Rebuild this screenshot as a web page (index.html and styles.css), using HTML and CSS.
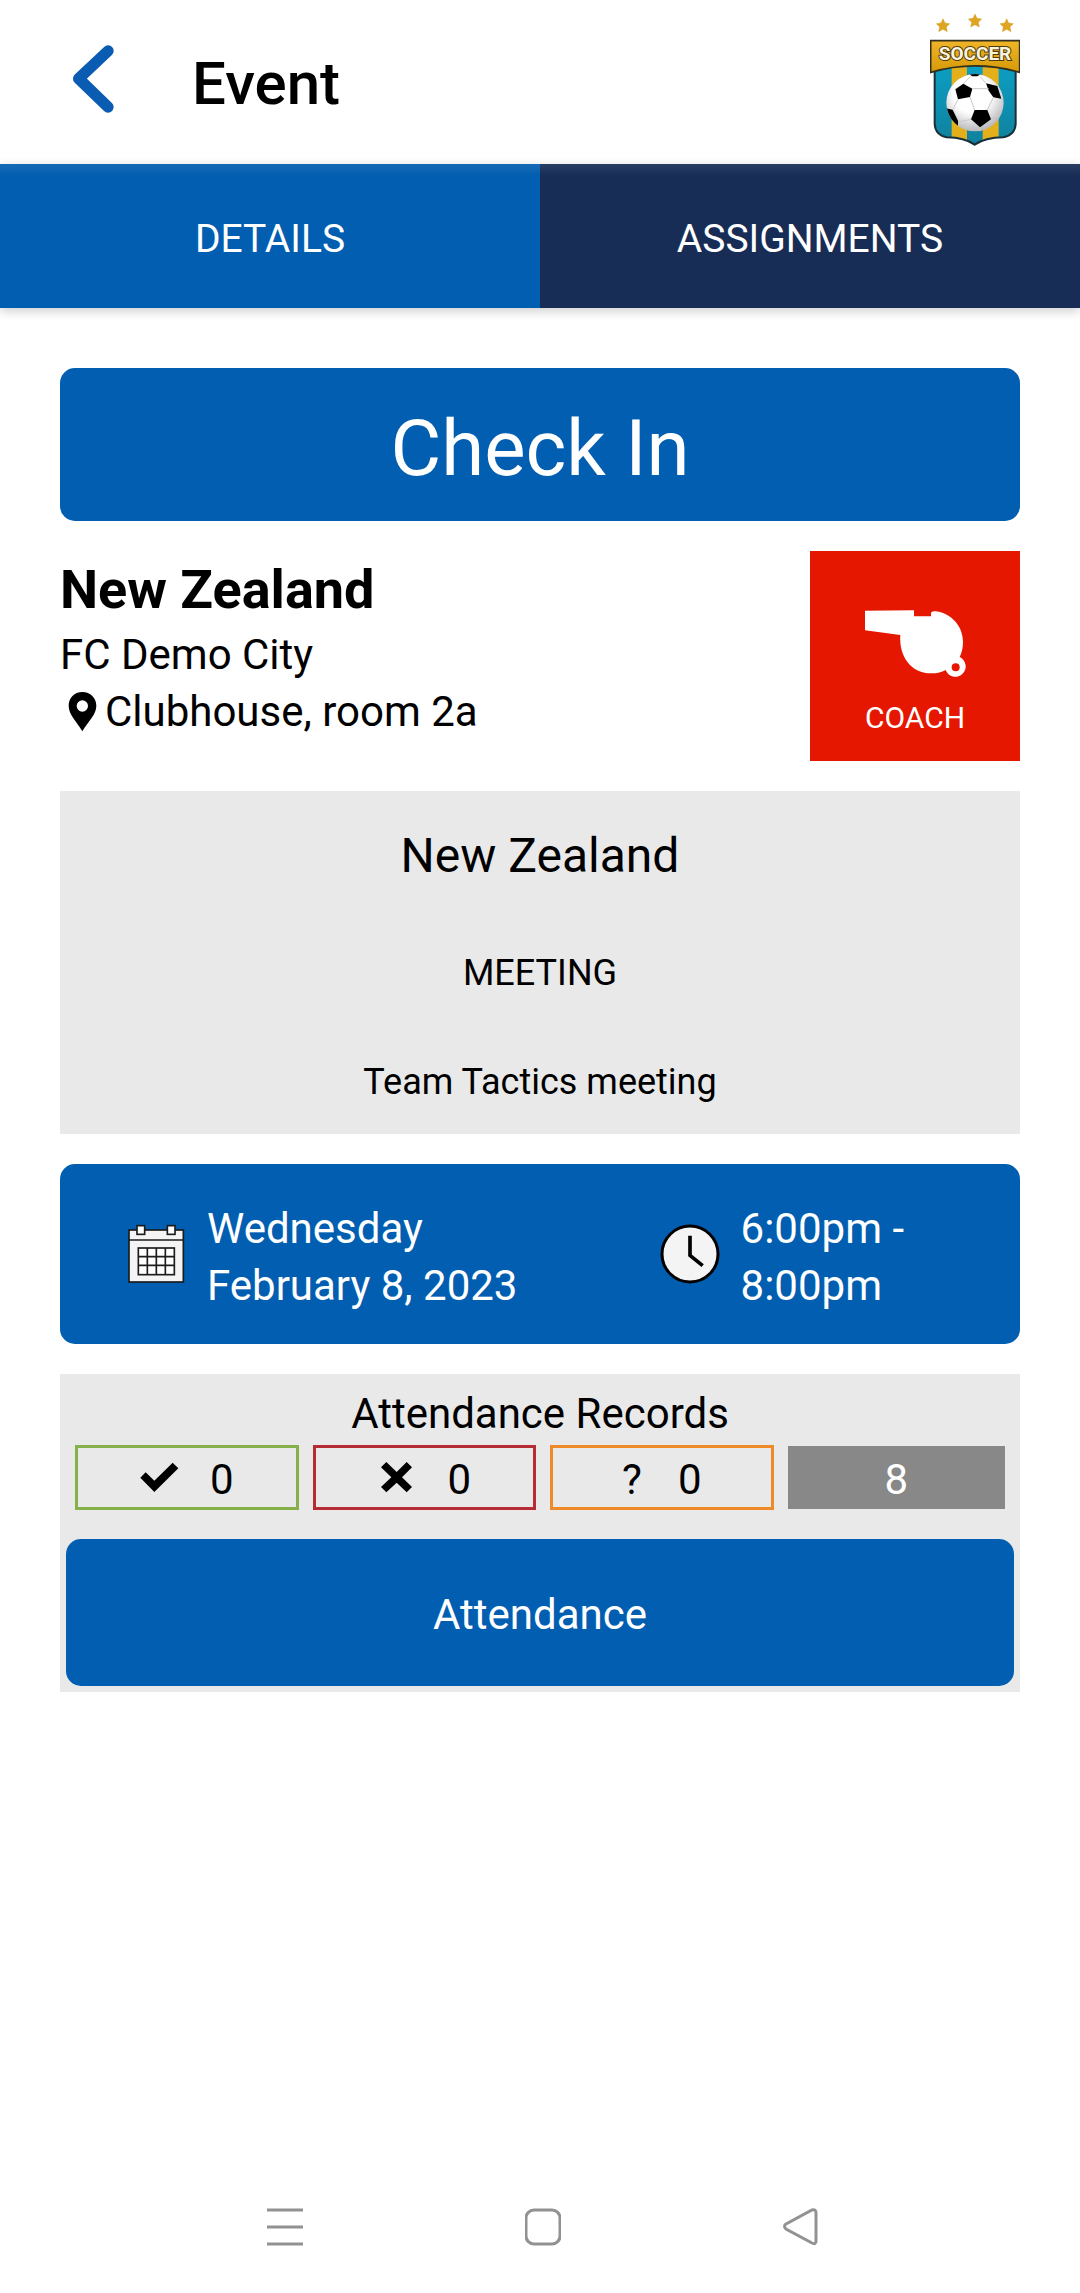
FILE: index.html
```html
<!DOCTYPE html>
<html lang="en">
<head>
    <meta charset="UTF-8">
    <meta name="viewport" content="width=device-width, initial-scale=1.0">
    <title>Event</title>
    <link rel="stylesheet" href="styles.css">
</head>
<body>
    <header class="topbar">
        <button class="back" aria-label="Back">
            <svg width="42" height="68" viewBox="216 138 126 204">
                <path d="M324 156 L236 239 L324 324" fill="none" stroke="#0a5cb3" stroke-width="34" stroke-linecap="round" stroke-linejoin="round"/>
            </svg>
        </button>
        <h1>Event</h1>
        <svg class="logo" width="90" height="134" viewBox="90 36 270 402" role="img" aria-label="Soccer">
            <defs>
                <linearGradient id="gold" x1="0" y1="0" x2="0" y2="1">
                    <stop offset="0" stop-color="#f0b428"/>
                    <stop offset="1" stop-color="#d59a08"/>
                </linearGradient>
                <linearGradient id="blue" x1="0" y1="0" x2="0" y2="1">
                    <stop offset="0" stop-color="#0b9fc4"/>
                    <stop offset="1" stop-color="#10809c"/>
                </linearGradient>
                <radialGradient id="ball" cx="0.45" cy="0.35" r="0.65">
                    <stop offset="0.5" stop-color="#fff"/>
                    <stop offset="1" stop-color="#b9b9bd"/>
                </radialGradient>
                <clipPath id="shield-clip">
                    <path d="M104 195 H347 V372 Q345 405 310 412 Q255 413 224 434 Q194 413 140 412 Q106 405 104 372 Z"/>
                </clipPath>
                <clipPath id="ball-clip"><circle cx="225" cy="308" r="86"/></clipPath>
                <path id="star" d="M0 -20 L6 -7 L20 -5 L10 5 L13 19 L0 12 L-13 19 L-10 5 L-20 -5 L-6 -7 Z"/>
            </defs>
            <!-- stars -->
            <g fill="#dfa420" stroke="#c98f15" stroke-width="1">
                <use href="#star" x="129" y="76"/>
                <use href="#star" x="225" y="62"/>
                <use href="#star" x="320" y="76"/>
            </g>
            <!-- shield -->
            <g clip-path="url(#shield-clip)">
                <rect x="100" y="190" width="250" height="250" fill="url(#blue)"/>
                <rect x="155" y="190" width="46" height="250" fill="#e3b01c"/>
                <rect x="248" y="190" width="48" height="250" fill="#e3b01c"/>
            </g>
            <path d="M104 195 H347 V372 Q345 405 310 412 Q255 413 224 434 Q194 413 140 412 Q106 405 104 372 Z" fill="none" stroke="#17303a" stroke-width="6"/>
            <!-- banner -->
            <path d="M92 122 H359 V217 Q225 178 92 217 Z" fill="url(#gold)" stroke="#33301f" stroke-width="5"/>
            <text x="225" y="181" text-anchor="middle" class="logo-text">SOCCER</text>
            <!-- ball -->
            <circle cx="225" cy="308" r="86" fill="url(#ball)"/>
            <g clip-path="url(#ball-clip)">
                <path d="M190 251 L217 266 L210 291 L174 298 L166 268 Z"/>
                <path d="M258 250 L292 258 L304 296 L280 292 L266 272 Z"/>
                <path d="M224 330 H262 L273 358 L240 382 L213 358 Z"/>
                <path d="M138 325 L158 329 L174 362 L174 382 L150 368 Z"/>
                <path d="M208 222 H243 L232 229 H216 Z"/>
                <path d="M217 266 H266 M210 291 L224 330 M280 292 L262 330 M174 298 L158 329 M213 358 L174 366 M273 358 L300 345 M190 251 L212 229 M258 250 L240 229 M240 382 V394" fill="none" stroke="#c9c9cc" stroke-width="3"/>
            </g>
        </svg>
    </header>

    <nav class="tabs">
        <button class="tab active">DETAILS</button>
        <button class="tab">ASSIGNMENTS</button>
    </nav>

    <main class="content">
        <button class="btn check-in">Check In</button>

        <!-- Team and location -->
        <section class="team">
            <div class="team-info">
                <h2>New Zealand</h2>
                <p>FC Demo City</p>
                <p class="location">
                    <svg width="45" height="42" viewBox="60 454 135 126">
                        <path fill-rule="evenodd" d="M127 457 C103 457 86 475 86 498 C86 525 110 545 127 575 C144 545 169 525 169 498 C169 475 151 457 127 457 Z M127 482 A17 17 0 1 1 127 516 A17 17 0 1 1 127 482 Z"/>
                    </svg>
                    Clubhouse, room 2a
                </p>
            </div>
            <div class="role">
                <svg width="101" height="68" viewBox="225 239 303 204">
                    <path fill="#fff" d="M225 241 L372 240 V258 H423 V247 Q426 241 438 243 C485 250 519 288 519 335 Q519 360 509 380 A31 31 0 1 1 467 419 Q447 430 422 429 C370 429 326 385 331 314 L225 300 Z"/>
                    <circle cx="497" cy="411" r="12" fill="#e51700"/>
                </svg>
                <span>COACH</span>
            </div>
        </section>

        <!-- Event description -->
        <section class="summary">
            <h3>New Zealand</h3>
            <p>MEETING</p>
            <p>Team Tactics meeting</p>
        </section>

        <!-- Date and time -->
        <section class="when">
            <div class="when-item">
                <svg width="60" height="60" viewBox="258 218 180 180" stroke="#1c1c1c" stroke-width="5">
                    <rect x="267" y="236" width="163" height="156" fill="#f4f4f4"/>
                    <path d="M267 266 H430"/>
                    <rect x="291" y="223" width="23" height="26" fill="#fff"/>
                    <rect x="382" y="223" width="23" height="26" fill="#fff"/>
                    <rect x="295" y="290" width="108" height="80" fill="#fff"/>
                    <path d="M322 290 V370 M349 290 V370 M376 290 V370 M295 316 H403 M295 342 H403"/>
                </svg>
                <p>Wednesday<br>February 8, 2023</p>
            </div>
            <div class="when-item">
                <svg width="60" height="60" viewBox="359 219 180 180">
                    <circle cx="449" cy="309" r="84" fill="#f4f4f4" stroke="#000" stroke-width="9"/>
                    <path d="M449 254 V313 L487 344" fill="none" stroke="#000" stroke-width="11"/>
                </svg>
                <p>6:00pm -<br>8:00pm</p>
            </div>
        </section>

        <!-- Attendance -->
        <section class="attendance">
            <h3>Attendance Records</h3>
            <div class="stats">
                <div class="stat yes">
                    <svg width="40" height="32" viewBox="298 308 120 96">
                        <path d="M299 355 L315 339 L341 364 L396 310 L413 327 L341 398 Z"/>
                    </svg>
                    <span>0</span>
                </div>
                <div class="stat no">
                    <svg width="40" height="32" viewBox="1011 308 120 96">
                        <path d="M1039 308 L1070 338 L1100 308 L1116 324 L1086 354 L1116 383 L1100 399 L1070 370 L1039 399 L1023 383 L1054 354 L1023 324 Z"/>
                    </svg>
                    <span>0</span>
                </div>
                <div class="stat maybe"><span>?</span><span>0</span></div>
                <div class="stat total"><span>8</span></div>
            </div>
            <button class="btn">Attendance</button>
        </section>
    </main>

    <!-- System navigation -->
    <footer class="system-nav">
        <button aria-label="Recent apps">
            <svg width="36" height="44" viewBox="0 0 36 44"><path d="M0 5 H36 M0 22 H36 M0 39 H36"/></svg>
        </button>
        <button aria-label="Home">
            <svg width="36" height="44" viewBox="0 0 36 44"><rect x="1" y="5" width="34" height="34" rx="8"/></svg>
        </button>
        <button aria-label="Go back">
            <svg width="36" height="44" viewBox="0 0 36 44"><path d="M3 19 L29 5 Q33 4 33 8 V36 Q33 40 29 38 L3 24 Q0 21 3 19 Z"/></svg>
        </button>
    </footer>
</body>
</html>
```
FILE: styles.css
```css
* {
    box-sizing: border-box;
}
body {
    margin: 0;
    min-height: 100vh;
    display: flex;
    flex-direction: column;
    background: #fff;
    color: #000;
    font-family: Roboto, "Liberation Sans", sans-serif;
    font-size: 42px;
    line-height: 57px;
}
h1, h2, h3, p {
    margin: 0;
    font-weight: 400;
}
button {
    border: none;
    padding: 0;
    background: none;
    font-family: inherit;
    cursor: pointer;
}
svg {
    display: block;
    flex: none;
}

/* Header */
.topbar {
    display: flex;
    align-items: center;
    height: 164px;
    padding: 0 60px 6px;
}
.back {
    width: 132px;
    padding-left: 12px;
}
.topbar h1 {
    padding-top: 10px;
    font-size: 60px;
    font-weight: 500;
    line-height: 72px;
}
.logo {
    margin-left: auto;
}
.logo-text {
    font-size: 57px;
    font-weight: 700;
    fill: #fbf3dc;
    stroke: #4d3d12;
    stroke-width: 6px;
    paint-order: stroke;
}

/* Tabs */
.tabs {
    display: flex;
    box-shadow: 0 3px 10px rgba(0, 0, 0, 0.2);
}
.tab {
    flex: 1;
    height: 144px;
    padding-top: 6px;
    background: linear-gradient(rgba(255, 255, 255, 0.08), rgba(255, 255, 255, 0) 12px) #172d56;
    color: #fff;
    font-size: 39px;
}
.tab.active {
    background-color: #025eb0;
}

.content {
    flex: 1;
    display: flex;
    flex-direction: column;
    gap: 30px;
    padding: 60px;
}
.btn {
    height: 147px;
    padding-top: 4px;
    border-radius: 15px;
    background: #025eb0;
    color: #fff;
    font-size: 42px;
}
.check-in {
    height: 153px;
    padding-top: 8px;
    font-size: 78px;
}

/* Team */
.team {
    display: flex;
    justify-content: space-between;
}
.team-info {
    padding-top: 3px;
}
.team-info h2 {
    font-size: 54px;
    font-weight: 700;
    line-height: 72px;
}
.location {
    display: flex;
    align-items: center;
}
.role {
    display: flex;
    flex-direction: column;
    align-items: center;
    justify-content: flex-end;
    gap: 19px;
    width: 210px;
    height: 210px;
    padding-bottom: 22px;
    background: #e51700;
    color: #fff;
    font-size: 30px;
    line-height: 42px;
}

/* Summary */
.summary {
    display: flex;
    flex-direction: column;
    gap: 60px;
    padding: 32px 30px 27px;
    background: #e9e9e9;
    font-size: 36px;
    line-height: 49px;
    text-align: center;
}
.summary h3 {
    font-size: 48px;
    line-height: 66px;
}

/* Date and time */
.when {
    display: flex;
    justify-content: space-between;
    min-height: 180px;
    padding: 0 116px 0 66px;
    border-radius: 15px;
    background: #025eb0;
    color: #fff;
}
.when-item {
    display: flex;
    align-items: center;
    gap: 21px;
}
.when-item p {
    padding-top: 6px;
}

/* Attendance */
.attendance {
    display: flex;
    flex-direction: column;
    padding: 11px 6px 6px;
    background: #e9e9e9;
}
.attendance h3 {
    text-align: center;
    font-size: 42px;
}
.stats {
    display: flex;
    gap: 14px;
    margin: 3px 9px 29px;
}
.stat {
    flex: 1;
    display: flex;
    align-items: center;
    justify-content: center;
    gap: 30px;
    height: 65px;
    border: 3px solid;
}
.stat span {
    padding-top: 4px;
}
.stat.yes {
    border-color: #86b049;
}
.stat.no {
    border-color: #b62c34;
}
.stat.maybe {
    gap: 36px;
    border-color: #ee8a28;
}
.stat.total {
    height: 63px;
    margin: 1px 0;
    border: none;
    background: #888;
    color: #fff;
}

/* System navigation */
.system-nav {
    display: flex;
    justify-content: center;
    gap: 222px;
    padding: 0 0 44px 6px;
}
.system-nav svg {
    fill: none;
    stroke: #929292;
    stroke-width: 3;
}
```
